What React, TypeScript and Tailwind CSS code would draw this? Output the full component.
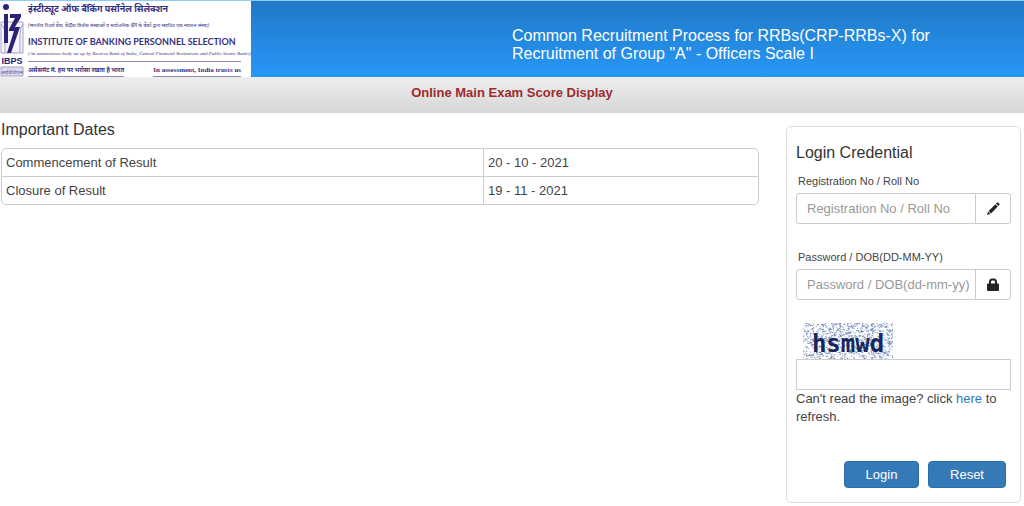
import { useState } from "react";

type ImportantDate = {
	label: string;
	date: string;
};

const importantDates: ImportantDate[] = [
	{ label: "Commencement of Result", date: "20 - 10 - 2021" },
	{ label: "Closure of Result", date: "19 - 11 - 2021" },
];

// small seeded generator, the noise stays the same between renders
function getNoise(count: number, width: number, height: number) {
	let seed = 42;
	const next = () => {
		seed = (seed * 16807) % 2147483647;
		return seed / 2147483647;
	};
	let path = "";
	for (let i = 0; i < count; i++) {
		const x = (next() * width).toFixed(1);
		const y = (next() * height).toFixed(1);
		const dx = (next() * 3 - 1).toFixed(1);
		const dy = (next() * 2 - 1).toFixed(1);
		path += `M${x} ${y}l${dx} ${dy}`;
	}
	return path;
}

const captchaNoise = getNoise(1150, 90, 36);

function IbpsMark() {
	return (
		<svg viewBox="0 0 24 76" className="h-[76px] w-6 shrink-0" role="img" aria-label="IBPS">
			<path d="M1 21H23V52H1Z" fill="#f4f4fb" stroke="#a3a1ca" />
			<path d="M1 23Q5 26 5 33V52M23 23Q20 26 20 33V52" fill="none" stroke="#a3a1ca" />
			<circle cx="6" cy="6" r="3" fill="#2b2176" />
			<path d="M4 13H8V42H4Z" fill="#2b2176" />
			<path d="M10 13H21V16L15 26H20L11 52H7L14 30H9V28L15 17H10Z" fill="#2b2176" />
			<text x="12" y="63" textAnchor="middle" fontSize="9" fontWeight="700" fontFamily="Liberation Sans, sans-serif" fill="#2b2176">
				IBPS
			</text>
			<path d="M1 66H23V75H1Z" fill="#dedcee" stroke="#a3a1ca" />
			<text x="12" y="73" textAnchor="middle" fontSize="5" fontFamily="Noto Sans, sans-serif" fill="#5b5597">
				आईबीपीएस
			</text>
		</svg>
	);
}

function IbpsLogo() {
	return (
		<div className="flex w-[251px] shrink-0 gap-1 bg-white text-[#37307f]">
			<IbpsMark />
			<div className="flex w-[213px] shrink-0 flex-col whitespace-nowrap">
				<p className="h-[18px] font-[Noto_Sans,sans-serif] text-[9px] leading-[16px] font-bold">
					इंस्टीट्यूट ऑफ बैंकिंग पर्सोनेल सिलेक्शन
				</p>
				<p className="h-[16px] font-[Noto_Sans,sans-serif] text-[5px] leading-[12px] italic">
					(भारतीय रिज़र्व बैंक, केंद्रीय वित्तीय संस्थाओं व सार्वजनिक क्षेत्र के बैंकों द्वारा स्थापित एक स्वायत्त संस्था)
				</p>
				<p className="h-[13px] font-[Lato,sans-serif] text-[9px] leading-[13px] font-bold">
					INSTITUTE OF BANKING PERSONNEL SELECTION
				</p>
				<p className="h-[14px] border-b border-[#8c8ab8] font-[Liberation_Serif,serif] text-[5px] leading-[11px] italic">
					(An autonomous body set up by Reserve Bank of India, Central Financial Institutions and Public Sector Banks)
				</p>
				<div className="mt-[3px] flex justify-between leading-[11px] font-bold">
					<p className="border-b border-[#8c8ab8] font-[Noto_Sans,sans-serif] text-[6px]">
						असेसमेंट में, हम पर भरोसा रखता है भारत
					</p>
					<p className="border-b border-[#8c8ab8] font-[Liberation_Serif,serif] text-[7px]">
						In assessment, India trusts us
					</p>
				</div>
			</div>
		</div>
	);
}

function PencilIcon() {
	return (
		<svg viewBox="0 0 14 14" className="size-[14px]" fill="#222" aria-hidden="true">
			<path d="M1 13L2 9.6L4.4 12Z" />
			<path d="M2.6 9L9.4 2.2L11.8 4.6L5 11.4Z" />
			<path d="M10 1.6L11.1.6Q11.7.2 12.2.7L13.3 1.8Q13.8 2.3 13.3 2.9L12.4 4Z" />
		</svg>
	);
}

function LockIcon() {
	return (
		<svg viewBox="0 0 14 14" className="size-[14px]" aria-hidden="true">
			<path d="M4 7V4Q4 1.4 6 1.4H8Q10 1.4 10 4V7" fill="none" stroke="#222" strokeWidth="2" />
			<rect x="1" y="5.5" width="12" height="7.5" rx="1" fill="#222" />
		</svg>
	);
}

function Captcha() {
	return (
		<svg viewBox="0 0 90 36" className="ml-[7px] block h-9 w-[90px]" role="img" aria-label="Captcha">
			<path d={captchaNoise} stroke="#5a73a8" strokeWidth="0.8" fill="none" />
			<text x="45" y="29" textAnchor="middle" fontFamily="DejaVu Sans Mono, monospace" fontWeight="700" fontSize="24" fill="#17265f">
				hsmwd
			</text>
		</svg>
	);
}

export default function App() {
	const [registration, setRegistration] = useState("");
	const [password, setPassword] = useState("");
	const [captcha, setCaptcha] = useState("");

	const resetForm = () => {
		setRegistration("");
		setPassword("");
		setCaptcha("");
	};

	return (
		<div className="bg-white font-[Liberation_Sans,Arial,sans-serif] text-[13px] text-[#444]">
			{/* ========================== Header ==========================*/}
			<header className="flex h-[77px] border-t border-[#8fcdf3] bg-linear-to-b from-[#2079c7] to-[#2797f7]">
				<div className="flex w-1/2">
					<IbpsLogo />
				</div>
				<h1 className="w-1/2 pt-[26px] text-[16px] leading-[18px] text-white">
					Common Recruitment Process for RRBs(CRP-RRBs-X) for
					<br />
					Recruitment of Group "A" - Officers Scale I
				</h1>
			</header>
			<div className="flex h-9 items-center justify-center bg-linear-to-b from-[#eeeeee] to-[#d6d6d6] pb-1">
				<h2 className="text-[13px] font-bold text-[#9c2b2e]">Online Main Exam Score Display</h2>
			</div>

			<main className="flex items-start gap-[27px] pr-[3px] pl-px">
				{/* ========================== Important dates ==========================*/}
				<section className="flex-1 pt-2">
					<h3 className="text-[16px] leading-[18px] text-[#333]">Important Dates</h3>
					<table className="mt-[9px] w-full table-fixed border-separate border-spacing-0 rounded-[5px] border border-[#ccc]">
						<tbody>
							{importantDates.map((item, index) => (
								<tr key={item.label} className={index > 0 ? "h-7" : "h-[27px]"}>
									<th
										scope="row"
										className={`w-[482px] border-r border-[#ccc] px-1 text-left font-normal ${index > 0 ? "border-t" : ""}`}
									>
										{item.label}
									</th>
									<td className={`border-[#ccc] px-1 ${index > 0 ? "border-t" : ""}`}>
										{item.date}
									</td>
								</tr>
							))}
						</tbody>
					</table>
				</section>

				{/* ========================== Login ==========================*/}
				<form
					onSubmit={(e) => e.preventDefault()}
					className="mt-[13px] w-[235px] rounded-[5px] border border-[#ddd] px-[9px] pt-[17px] pb-[14px]"
				>
					<h3 className="text-[16px] leading-[18px] text-[#333]">Login Credential</h3>
					<label htmlFor="registration" className="mt-3 block pl-[2px] text-[11px] leading-[14px]">
						Registration No / Roll No
					</label>
					<div className="mt-[5px] flex h-[31px] rounded-[3px] border border-[#ccc]">
						<input
							id="registration"
							type="text"
							placeholder="Registration No / Roll No"
							value={registration}
							onChange={(e) => setRegistration(e.target.value)}
							className="min-w-0 flex-1 pl-[10px] outline-none placeholder:text-[#999]"
						/>
						<span className="flex w-[35px] items-center justify-center border-l border-[#ccc]">
							<PencilIcon />
						</span>
					</div>
					<label htmlFor="password" className="mt-[26px] block pl-[2px] text-[11px] leading-[14px]">
						Password / DOB(DD-MM-YY)
					</label>
					<div className="mt-[5px] flex h-[31px] rounded-[3px] border border-[#ccc]">
						<input
							id="password"
							type="password"
							placeholder="Password / DOB(dd-mm-yy)"
							value={password}
							onChange={(e) => setPassword(e.target.value)}
							className="min-w-0 flex-1 pl-[10px] outline-none placeholder:text-[#999]"
						/>
						<span className="flex w-[35px] items-center justify-center border-l border-[#ccc]">
							<LockIcon />
						</span>
					</div>
					<div className="mt-[23px]">
						<Captcha />
						<input
							type="text"
							aria-label="Captcha"
							value={captcha}
							onChange={(e) => setCaptcha(e.target.value)}
							className="block h-[31px] w-full border border-[#ccc] px-2 outline-none"
						/>
					</div>
					<p className="leading-[18px]">
						Can't read the image? click{" "}
						<a href="#" className="text-[#337ab7]">
							here
						</a>{" "}
						to
						<br />
						refresh.
					</p>
					<div className="mt-[35px] flex justify-end gap-[9px] pr-[5px]">
						<button type="submit" className="h-[27px] w-[75px] rounded-[4px] border border-[#2e6da4] bg-[#337ab7] text-white">
							Login
						</button>
						<button
							type="button"
							onClick={resetForm}
							className="h-[27px] w-[78px] rounded-[4px] border border-[#2e6da4] bg-[#337ab7] text-white"
						>
							Reset
						</button>
					</div>
				</form>
			</main>
		</div>
	);
}
